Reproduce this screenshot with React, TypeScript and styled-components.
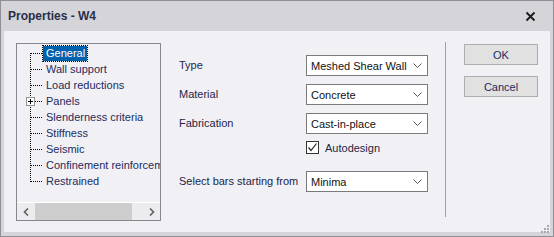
import React from 'react'
import styled, { createGlobalStyle } from 'styled-components'

const GlobalStyle = createGlobalStyle`
	html, body {
		margin: 0;
		padding: 0;
		background: #ffffff;
	}
	body {
		font-family: 'Liberation Sans', Arial, sans-serif;
	}
`

const FONT = `'Liberation Sans', Arial, sans-serif`
const TEXT = '#1f2447'
const TREE_TEXT = '#1d2b5e'

const Window = styled.div`
	width: 554px;
	height: 237px;
	box-sizing: border-box;
	border: 1px solid #8e8e94;
	background: #d4d4d9;
	display: flex;
	flex-direction: column;
	position: relative;
`

const TitleBar = styled.div`
	height: 30px;
	display: flex;
	align-items: center;
	justify-content: space-between;
	padding: 0 17px 0 7px;
`

const Title = styled.span`
	font-family: ${FONT};
	font-weight: 700;
	font-size: 12px;
	color: #2a2f48;
`

const CloseButton = styled.div`
	width: 11px;
	height: 11px;
	display: flex;
	margin-top: 1px;
`

const Panel = styled.div`
	margin: 0 3px;
	height: 201px;
	background: #f1f1f5;
	display: flex;
	padding: 12px 12px 0 12px;
	box-sizing: border-box;
`

const Tree = styled.div`
	width: 145px;
	height: 178px;
	box-sizing: border-box;
	border: 1px solid #828790;
	background: #f1f1f5;
	display: flex;
	flex-direction: column;
	flex-shrink: 0;
	overflow: hidden;
`

const TreeBody = styled.div`
	flex: 1;
	position: relative;
	padding-top: 1px;
	overflow: hidden;
`

const TreeLine = styled.div`
	position: absolute;
	left: 13px;
	top: 9px;
	height: 129px;
	border-left: 1px dotted #000;
`

const TreeRow = styled.div`
	height: 16px;
	display: flex;
	align-items: center;
	white-space: nowrap;
	position: relative;
`

const Stub = styled.span`
	width: 11px;
	margin-left: 14px;
	border-top: 1px dotted #000;
	flex-shrink: 0;
`

const Expander = styled.span`
	position: absolute;
	left: 9px;
	top: 4px;
	width: 7px;
	height: 7px;
	border: 1px solid #919191;
	background: #fff;
	display: flex;
	align-items: center;
	justify-content: center;
`

const TreeLabel = styled.span<{ $selected?: boolean }>`
	font-family: ${FONT};
	font-size: 11px;
	line-height: 13px;
	padding: 1px 2px 1px 3px;
	margin-left: 1px;
	color: ${p => (p.$selected ? '#ffffff' : TREE_TEXT)};
	background: ${p => (p.$selected ? '#0061ad' : 'transparent')};
	outline: ${p => (p.$selected ? '1px dotted #000' : 'none')};
`

const HScroll = styled.div`
	height: 17px;
	border-top: 1px solid #ffffff;
	background: #ececef;
	display: flex;
	align-items: stretch;
`

const ScrollArrow = styled.div`
	width: 17px;
	display: flex;
	align-items: center;
	justify-content: center;
	flex-shrink: 0;
`

const ScrollTrack = styled.div`
	flex: 1;
	display: flex;
	padding: 0 1px;
	align-items: stretch;
`

const ScrollThumb = styled.div`
	width: 97px;
	background: #cdcdcd;
`

const Form = styled.div`
	margin-left: 16px;
	padding-top: 12px;
	display: grid;
	grid-template-columns: 129px 122px;
	grid-auto-rows: 21px;
	row-gap: 8px;
	align-content: start;
`

const Label = styled.span`
	font-family: ${FONT};
	font-size: 11px;
	color: ${TEXT};
	display: flex;
	align-items: center;
	padding-left: 2px;
	white-space: nowrap;
	transform: translateY(-1px);
`

const Select = styled.div`
	box-sizing: border-box;
	border: 1px solid #7a7a7a;
	background: #ffffff;
	display: flex;
	align-items: center;
	justify-content: space-between;
	padding: 0 5px 0 4px;
	font-family: ${FONT};
	font-size: 11px;
	color: #111;
	white-space: nowrap;
`

const CheckRow = styled.div`
	grid-column: 2;
	display: flex;
	align-items: center;
	gap: 6px;
	height: 13px;
	margin-top: -1px;
	font-family: ${FONT};
	font-size: 11px;
	color: ${TEXT};
`

const CheckBox = styled.span`
	width: 13px;
	height: 13px;
	box-sizing: border-box;
	border: 1px solid #333;
	background: #fff;
	display: flex;
	align-items: center;
	justify-content: center;
`

const Separator = styled.div`
	width: 1px;
	height: 175px;
	margin: -1px 0 0 17px;
	background: #a0a0a0;
	flex-shrink: 0;
`

const Buttons = styled.div`
	margin-left: 18px;
	display: flex;
	flex-direction: column;
	gap: 11px;
	padding-top: 1px;
`

const Button = styled.div`
	width: 74px;
	height: 21px;
	box-sizing: border-box;
	border: 1px solid #adadad;
	background: #e1e1e1;
	display: flex;
	align-items: center;
	justify-content: center;
	font-family: ${FONT};
	font-size: 11px;
	color: ${TREE_TEXT};
`

const Grip = styled.div`
	position: absolute;
	right: 3px;
	bottom: 2px;
	width: 9px;
	height: 9px;
	display: flex;
`

const Chevron = () => (
	<svg width="9" height="5" viewBox="0 0 9 5">
		<polyline points="0.5,0.5 4.5,4.5 8.5,0.5" fill="none" stroke="#555" strokeWidth="1" />
	</svg>
)

const treeItems = [
	'General',
	'Wall support',
	'Load reductions',
	'Panels',
	'Slenderness criteria',
	'Stiffness',
	'Seismic',
	'Confinement reinforcement',
	'Restrained',
]

const fields = [
	{ label: 'Type', value: 'Meshed Shear Wall' },
	{ label: 'Material', value: 'Concrete' },
	{ label: 'Fabrication', value: 'Cast-in-place' },
]

export default function App() {
	return (
		<>
			<GlobalStyle />
			<Window>
				<TitleBar>
					<Title>Properties - W4</Title>
					<CloseButton>
						<svg width="11" height="11" viewBox="0 0 11 11">
							<path d="M1.5 1.5 L9.5 9.5 M9.5 1.5 L1.5 9.5" stroke="#1a1a1a" strokeWidth="1.8" />
						</svg>
					</CloseButton>
				</TitleBar>
				<Panel>
					<Tree>
						<TreeBody>
							<TreeLine />
							{treeItems.map((item, i) => (
								<TreeRow key={item}>
									{item === 'Panels' && (
										<Expander>
											<svg width="5" height="5" viewBox="0 0 5 5">
												<path d="M0 2.5 H5 M2.5 0 V5" stroke="#000" strokeWidth="1" />
											</svg>
										</Expander>
									)}
									<Stub />
									<TreeLabel $selected={i === 0}>{item}</TreeLabel>
								</TreeRow>
							))}
						</TreeBody>
						<HScroll>
							<ScrollArrow>
								<svg width="6" height="8" viewBox="0 0 6 8">
									<polyline points="5,0.5 1.5,4 5,7.5" fill="none" stroke="#606060" strokeWidth="1.6" />
								</svg>
							</ScrollArrow>
							<ScrollTrack>
								<ScrollThumb />
							</ScrollTrack>
							<ScrollArrow>
								<svg width="6" height="8" viewBox="0 0 6 8">
									<polyline points="1,0.5 4.5,4 1,7.5" fill="none" stroke="#606060" strokeWidth="1.6" />
								</svg>
							</ScrollArrow>
						</HScroll>
					</Tree>
					<Form>
						{fields.map(f => (
							<React.Fragment key={f.label}>
								<Label>{f.label}</Label>
								<Select>
									<span>{f.value}</span>
									<Chevron />
								</Select>
							</React.Fragment>
						))}
						<CheckRow>
							<CheckBox>
								<svg width="11" height="11" viewBox="0 0 11 11">
									<polyline points="1.5,5.5 4,8.5 9.5,1.5" fill="none" stroke="#222" strokeWidth="1.2" />
								</svg>
							</CheckBox>
							Autodesign
						</CheckRow>
						<Label>Select bars starting from</Label>
						<Select>
							<span>Minima</span>
							<Chevron />
						</Select>
					</Form>
					<Separator />
					<Buttons>
						<Button>OK</Button>
						<Button>Cancel</Button>
					</Buttons>
				</Panel>
				<Grip>
					<svg width="9" height="9" viewBox="0 0 9 9">
						{[[6, 0], [3, 3], [6, 3], [0, 6], [3, 6], [6, 6]].map(([x, y]) => (
							<rect key={`${x}-${y}`} x={x} y={y} width="2" height="2" fill="#a8a8ac" />
						))}
					</svg>
				</Grip>
			</Window>
		</>
	)
}
